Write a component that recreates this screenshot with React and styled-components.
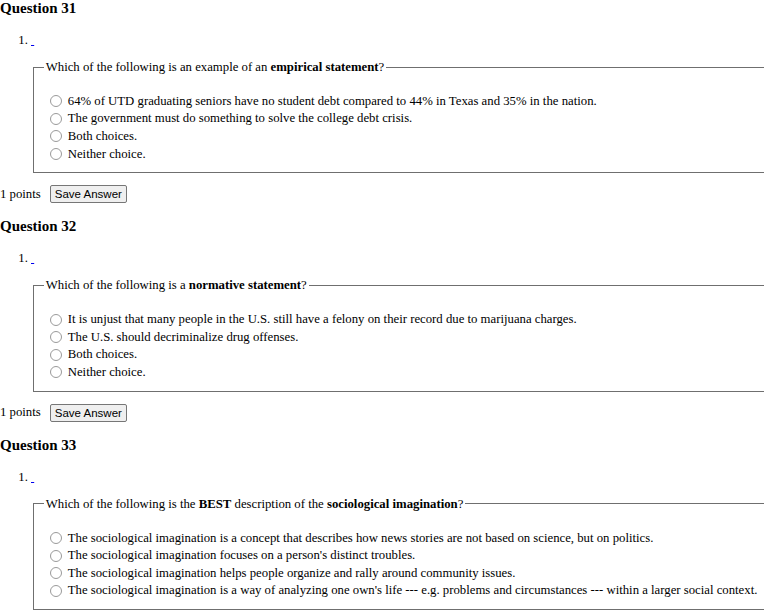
import React from 'react';
import styled, { createGlobalStyle } from 'styled-components';

const GlobalStyle = createGlobalStyle`
  html, body {
    margin: 0;
    padding: 0;
    background: #fff;
    overflow: hidden;
  }
  body {
    font-family: "Liberation Serif", "Times New Roman", serif;
    font-size: 12.75px;
    color: #000;
  }
`;

const Page = styled.div`
  width: 764px;
`;

const Block = styled.section`
  margin-bottom: 15px;
`;

const Heading = styled.h3`
  margin: 0;
  font-size: 15px;
  line-height: 17px;
  font-weight: bold;
`;

const Steps = styled.ol`
  margin: 15px 0 0;
  padding-left: 31px;
  line-height: 16px;
`;

const Step = styled.li``;

const Anchor = styled.a`
  color: #0000ee;
  text-decoration: underline;
`;

const Box = styled.fieldset`
  margin: 11px 0 0 2px;
  width: 800px;
  border: 1px solid #6f6f6f;
  padding: 4px 9.75px 10px;
`;

const Legend = styled.legend`
  padding: 0 2px;
  line-height: 16px;
`;

const Options = styled.div`
  margin-top: 13px;
`;

const Option = styled.label`
  display: flex;
  align-items: center;
  height: 17.6px;
  white-space: nowrap;
`;

const Radio = styled.input.attrs({ type: 'radio' })`
  appearance: none;
  box-sizing: border-box;
  width: 12px;
  height: 12px;
  margin: 1px 6px 0 6px;
  border: 1px solid #9a9a9a;
  border-radius: 50%;
  background: #fff;
  flex: none;
`;

const Footer = styled.div`
  display: flex;
  align-items: center;
  gap: 9px;
  margin-top: 12px;
  height: 18px;
`;

const SaveButton = styled.button`
  font-family: "Liberation Sans", Arial, sans-serif;
  font-size: 11.5px;
  height: 18px;
  padding: 0 4px;
  border: 1px solid #767676;
  border-radius: 2px;
  background: #efefef;
  color: #000;
`;

const questions = [
  {
    n: 31,
    prompt: (
      <>Which of the following is an example of an <b>empirical statement</b>?</>
    ),
    options: [
      '64% of UTD graduating seniors have no student debt compared to 44% in Texas and 35% in the nation.',
      'The government must do something to solve the college debt crisis.',
      'Both choices.',
      'Neither choice.',
    ],
  },
  {
    n: 32,
    prompt: (
      <>Which of the following is a <b>normative statement</b>?</>
    ),
    options: [
      'It is unjust that many people in the U.S. still have a felony on their record due to marijuana charges.',
      'The U.S. should decriminalize drug offenses.',
      'Both choices.',
      'Neither choice.',
    ],
  },
  {
    n: 33,
    prompt: (
      <>Which of the following is the <b>BEST</b> description of the <b>sociological imagination</b>?</>
    ),
    options: [
      'The sociological imagination is a concept that describes how news stories are not based on science, but on politics.',
      "The sociological imagination focuses on a person's distinct troubles.",
      'The sociological imagination helps people organize and rally around community issues.',
      "The sociological imagination is a way of analyzing one own's life --- e.g. problems and circumstances --- within a larger social context.",
    ],
  },
];

function Question({ q }) {
  return (
    <Block>
      <Heading>Question {q.n}</Heading>
      <Steps>
        <Step>
          <Anchor href="#">&nbsp;</Anchor>
          <Box>
            <Legend>{q.prompt}</Legend>
            <Options>
              {q.options.map((text, i) => (
                <Option key={i}>
                  <Radio name={`q${q.n}`} />
                  <span>{text}</span>
                </Option>
              ))}
            </Options>
          </Box>
        </Step>
      </Steps>
      {q.n !== 33 && (
        <Footer>
          <span>1 points</span>
          <SaveButton>Save Answer</SaveButton>
        </Footer>
      )}
    </Block>
  );
}

export default function App() {
  return (
    <Page>
      <GlobalStyle />
      {questions.map((q) => (
        <Question key={q.n} q={q} />
      ))}
    </Page>
  );
}
